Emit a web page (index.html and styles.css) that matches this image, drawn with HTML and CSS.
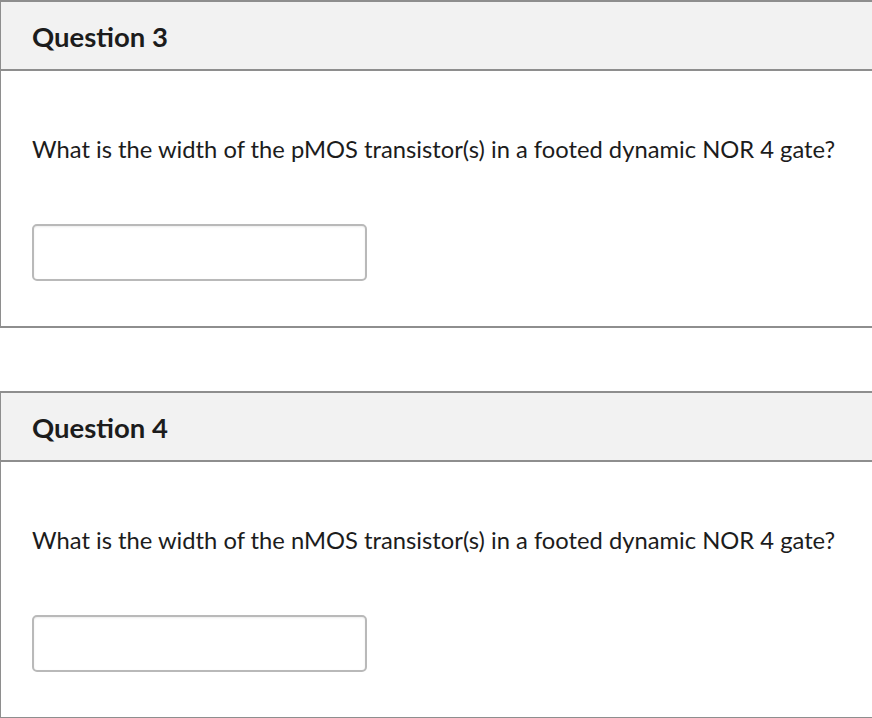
FILE: index.html
```html
<!DOCTYPE html>
<html>
<head>
<meta charset="utf-8">
<link rel="stylesheet" href="styles.css">
</head>
<body>
<div class="card">
  <div class="card-header">Question 3</div>
  <div class="card-body">
    <p class="question">What is the width of the pMOS transistor(s) in a footed dynamic NOR 4 gate?</p>
    <input class="answer" type="text">
  </div>
</div>
<div class="card card-second">
  <div class="card-header">Question 4</div>
  <div class="card-body">
    <p class="question">What is the width of the nMOS transistor(s) in a footed dynamic NOR 4 gate?</p>
    <input class="answer" type="text">
  </div>
</div>
</body>
</html>
```
FILE: styles.css
```css
html, body {
  margin: 0;
  padding: 0;
  background: #ffffff;
}
body {
  font-family: Lato, "Noto Sans", sans-serif;
  color: #1c1c1c;
}
.card {
  border-top: 2px solid #8e8e8e;
  border-bottom: 2px solid #8e8e8e;
  border-left: 1px solid #8e8e8e;
  box-sizing: border-box;
}
.card-second {
  margin-top: 63px;
}
.card-header {
  box-sizing: border-box;
  background: #f2f2f2;
  border-bottom: 2px solid #8e8e8e;
  height: 69px;
  display: flex;
  align-items: center;
  padding: 2px 0 0 31px;
  font-size: 27.5px;
  font-weight: 700;
}
.card-body {
  height: 255px;
  box-sizing: border-box;
  padding: 63px 0 0 31px;
}
.question {
  margin: 0;
  font-size: 23.75px;
  line-height: 30px;
}
.answer {
  display: block;
  margin-top: 60px;
  width: 335px;
  height: 57px;
  box-sizing: border-box;
  border: 2px solid #b9b9b9;
  border-radius: 5px;
  box-shadow: inset 0 1px 2px rgba(0,0,0,0.08);
  background: #fff;
  outline: none;
}
```
